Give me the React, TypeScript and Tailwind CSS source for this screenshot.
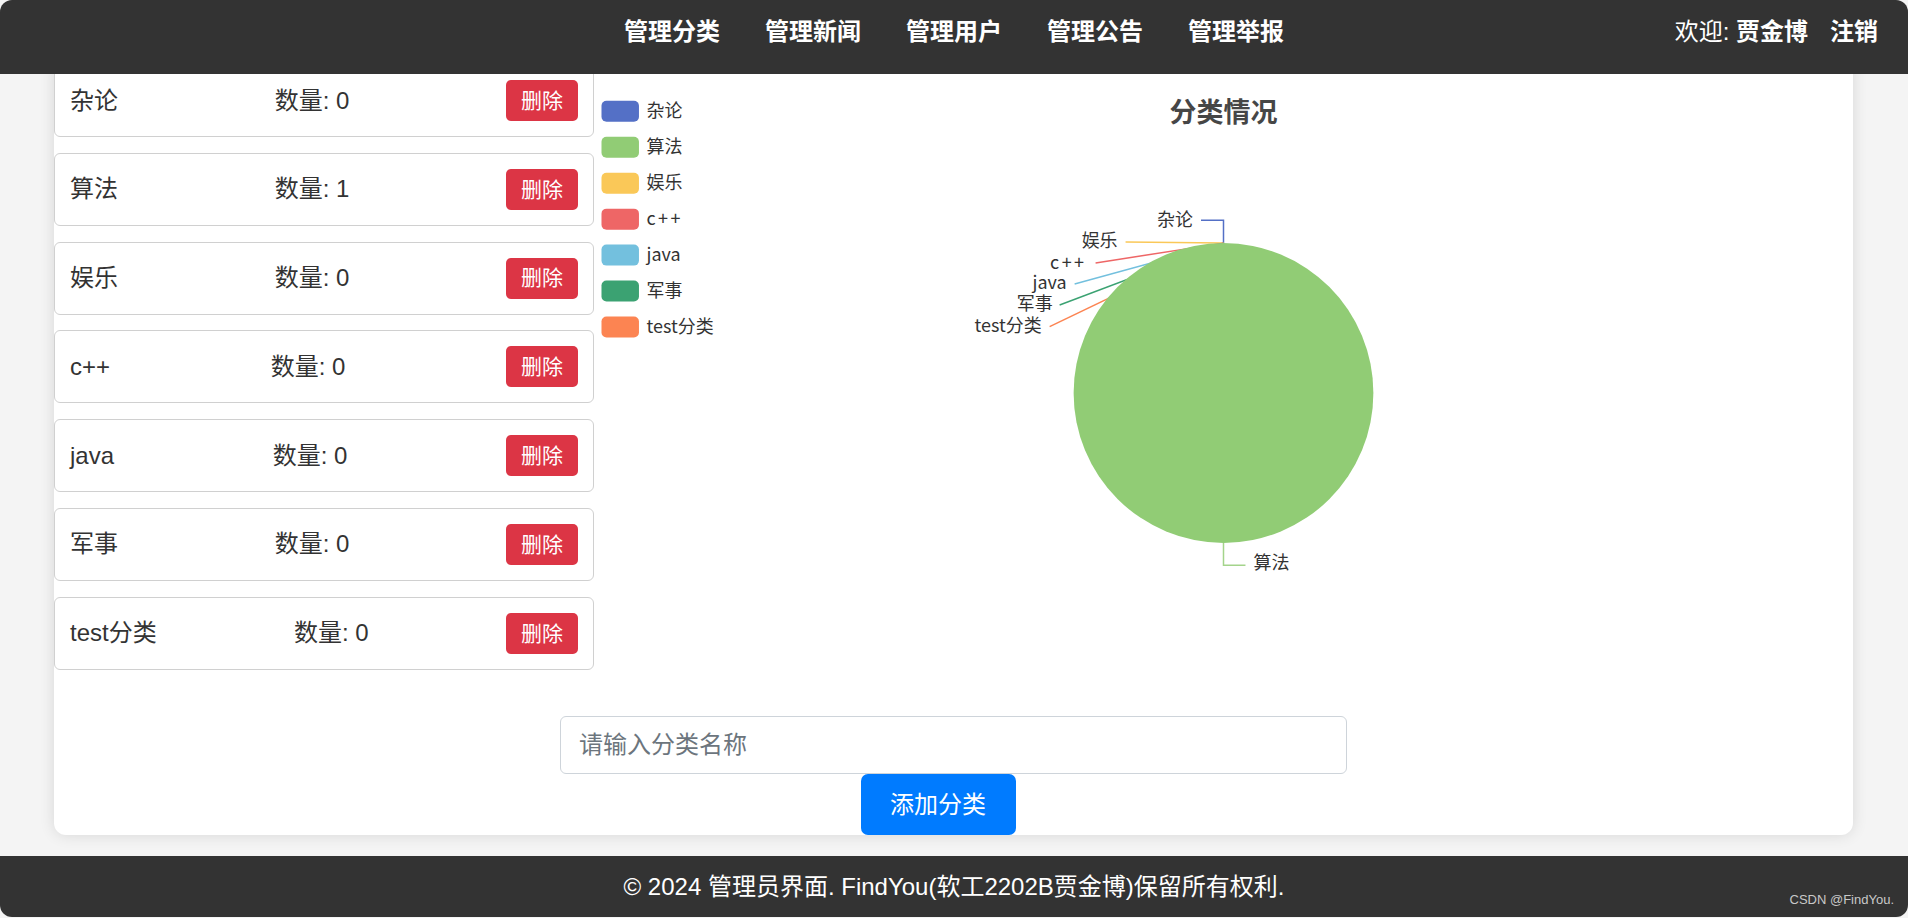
import React from "react";

type Category = { name: string; count: number; color: string };

const categories: Category[] = [
  { name: "杂论", count: 0, color: "#5470c6" },
  { name: "算法", count: 1, color: "#91cc75" },
  { name: "娱乐", count: 0, color: "#fac858" },
  { name: "c++", count: 0, color: "#ee6666" },
  { name: "java", count: 0, color: "#73c0de" },
  { name: "军事", count: 0, color: "#3ba272" },
  { name: "test分类", count: 0, color: "#fc8452" },
];

const navLinks = ["管理分类", "管理新闻", "管理用户", "管理公告", "管理举报"];

// label positions for the empty slices, stacked up the left of the pie top
const sideLabels = [
  { name: "娱乐", color: "#fac858", from: [532, 149], textX: 524, textY: 148.5 },
  { name: "c++", color: "#ee6666", from: [502, 169.8], textX: 493, textY: 170 },
  { name: "java", color: "#73c0de", from: [481, 191], textX: 473, textY: 190 },
  { name: "军事", color: "#3ba272", from: [466, 212], textX: 459, textY: 211.5 },
  { name: "test分类", color: "#fc8452", from: [456, 233.5], textX: 448, textY: 233 },
];

const chartFont = "'Noto Sans CJK SC', 'Liberation Sans', sans-serif";
// text sits a touch low with central baseline, nudge it up
const lift = 2.2;

function PieChart() {
  return (
    <svg viewBox="0 0 1260 600" className="block h-[600px] w-full" fontFamily={chartFont}>
      <text x={630} y={19.5 - lift} textAnchor="middle" dominantBaseline="central" fontSize={27} fontWeight={700} fill="#464646">
        分类情况
      </text>

      {categories.map((c, i) => (
        <g key={c.name}>
          <rect x={7.5} y={7.5 + 36 * i} width={37.5} height={21} rx={5} fill={c.color} />
          <text
            x={52.5}
            y={18 + 36 * i - lift}
            dominantBaseline="central"
            fontSize={18}
            fill="#333"
            letterSpacing={c.name === "c++" ? 2.5 : 0}
          >
            {c.name}
          </text>
        </g>
      ))}

      {/* label lines go under the pie */}
      <polyline points="607.5,127 630,127 630,150" fill="none" stroke="#5470c6" strokeWidth={1.5} />
      {sideLabels.map((l) => (
        <line key={l.name} x1={l.from[0]} y1={l.from[1]} x2={630} y2={150} stroke={l.color} strokeWidth={1.5} />
      ))}
      <polyline points="630,450 630,472.5 652,472.5" fill="none" stroke="#a4d48b" strokeWidth={1.5} />

      <circle cx={630} cy={300} r={150} fill="#91cc75" />

      <text x={599.5} y={126.8 - lift} textAnchor="end" dominantBaseline="central" fontSize={18} fill="#333">
        杂论
      </text>
      {sideLabels.map((l) => (
        <text
          key={l.name}
          x={l.textX}
          y={l.textY - lift}
          textAnchor="end"
          dominantBaseline="central"
          fontSize={18}
          fill="#333"
          letterSpacing={l.name === "c++" ? 2.5 : 0}
        >
          {l.name}
        </text>
      ))}
      <text x={660} y={470.5 - lift} dominantBaseline="central" fontSize={18} fill="#333">
        算法
      </text>
    </svg>
  );
}

function CategoryRow({ item }: { item: Category }) {
  return (
    <li className="flex h-[73px] items-center justify-between rounded-[6px] border border-[#d0d0d0] px-[15px] text-[24px] text-[#333]">
      <span>{item.name}</span>
      <span>数量: {item.count}</span>
      <button className="h-[41px] w-[72px] rounded-[5px] bg-[#dc3545] text-[21px] text-white">删除</button>
    </li>
  );
}

export default function App() {
  return (
    <div className="min-h-screen bg-[#f4f4f4] font-['Liberation_Sans','Noto_Sans_CJK_SC',sans-serif]">
      <nav className="fixed inset-x-0 top-0 z-10 grid h-[74px] grid-cols-[1fr_auto_1fr] items-center rounded-t-[12px] bg-[#333] pb-[10px] text-[24px] text-white">
        <div />
        <div className="flex gap-[45px] font-bold">
          {navLinks.map((t) => (
            <a key={t} href="#">
              {t}
            </a>
          ))}
        </div>
        <div className="flex justify-end gap-[22px] pr-[30px]">
          <span>
            欢迎: <b>贾金博</b>
          </span>
          <a href="#" className="font-bold">
            注销
          </a>
        </div>
      </nav>

      <main className="pl-[54px] pr-[55px] pt-[64px]">
        <div className="rounded-b-[12px] bg-white shadow-[0_0_15px_rgba(0,0,0,0.12)]">
          <div className="flex">
            <ul className="flex w-[540px] shrink-0 flex-col gap-[15.8px]">
              {categories.map((c) => (
                <CategoryRow key={c.name} item={c} />
              ))}
            </ul>
            <div className="mt-[29px] min-w-0 flex-1">
              <PieChart />
            </div>
          </div>

          <div className="mt-[23px] flex flex-col items-center">
            <input
              placeholder="请输入分类名称"
              className="h-[58px] w-[787px] rounded-[6px] border border-[#ced4da] px-[18px] text-[24px] text-[#495057] outline-none placeholder:text-[#6c757d]"
            />
            <button className="mr-[31px] h-[61px] w-[155px] rounded-[7px] bg-[#007bff] text-[24px] text-white">
              添加分类
            </button>
          </div>
        </div>
      </main>

      <footer className="relative mt-[21px] flex h-[61px] items-center justify-center rounded-b-[12px] bg-[#333] text-[24px] text-white">
        © 2024 管理员界面. FindYou(软工2202B贾金博)保留所有权利.
        <span className="absolute bottom-[8px] right-[14px] text-[13px] text-[#c8c8c8]">CSDN @FindYou.</span>
      </footer>
    </div>
  );
}
